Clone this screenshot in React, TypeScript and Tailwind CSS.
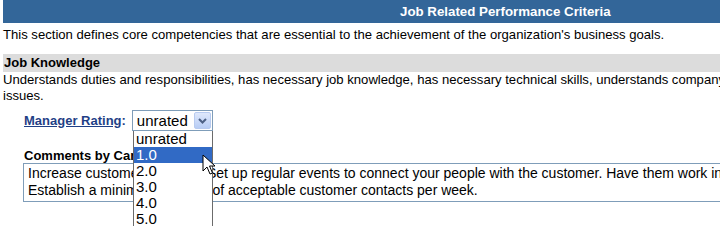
import React from 'react';

const ratings = ['unrated', '1.0', '2.0', '3.0', '4.0', '5.0'];

function Cursor() {
  return (
    <svg width="14" height="22" viewBox="0 0 14 22" className="absolute left-[202px] top-[154px]">
      <path d="M1 1 L1 17 L5 13 L8 20 L10.5 19 L7.5 12 L13 12 Z" fill="#fff" stroke="#000" strokeWidth="1" strokeLinejoin="miter" />
    </svg>
  );
}

export default function App() {
  return (
    <div className="relative w-[720px] h-[226px] overflow-hidden bg-white text-black font-['Liberation_Sans',Arial,sans-serif]">
      <div className="w-[1010px] pl-[3px]">
        {/* section header */}
        <div className="h-[23px] bg-[#336699] text-white font-bold text-[13.3px] leading-[23px] pl-[397px]">
          Job Related Performance Criteria
        </div>
        <p className="mt-[4px] text-[13.1px] leading-[16px]">
          This section defines core competencies that are essential to the achievement of the organization's business goals.
        </p>

        <div className="mt-[11px] h-[18px] bg-[#dcdcdc] pl-[1px] font-bold text-[13px] leading-[18px]">Job Knowledge</div>
        <div className="text-[13.1px] leading-[16px]">
          <div className="whitespace-nowrap">
            Understands duties and responsibilities, has necessary job knowledge, has necessary technical skills, understands company policies and procedures.
          </div>
          <div>issues.</div>
        </div>

        {/* rating */}
        <div className="mt-[6px] ml-[21px] flex items-center h-[21px]">
          <span className="text-[13px] font-bold text-[#1f3f86]">
            <span className="underline">Manager Rating</span>:
          </span>
          <div className="ml-[6px] w-[81px] h-[21px] border border-[#7f9db9] flex items-center bg-white">
            <span className="pl-[4px] text-[15px] leading-[18px] flex-1">unrated</span>
            <span className="mr-[1px] w-[17px] h-[17px] rounded-[2px] border border-[#b8cbf0] bg-gradient-to-b from-[#dfe8fb] to-[#b8cdf5] flex items-center justify-center">
              <svg width="9" height="6" viewBox="0 0 9 6">
                <path d="M1 1 L4.5 4.5 L8 1" fill="none" stroke="#4d6185" strokeWidth="2" />
              </svg>
            </span>
          </div>
        </div>

        <div className="mt-[17px] ml-[21px] text-[13px] font-bold leading-[15px]">Comments by Career Coach:</div>
        <div className="ml-[20px] h-[39px] border border-[#7f9db9] pl-[4px] pt-[1px] text-[14px] leading-[17px]">
          <div className="whitespace-nowrap">
            Increase customer contacts. Set up regular events to connect your people with the customer. Have them work in teams.
          </div>
          <div className="whitespace-nowrap">Establish a minimum number of acceptable customer contacts per week.</div>
        </div>

        <div className="mt-[24px] border-t border-[#d6d6d6]" />
      </div>

      {/* open dropdown list */}
      <ul className="absolute left-[133px] top-[131px] w-[80px] border-x border-[#6b6b6b] bg-white text-[15px] leading-[16px]">
        {ratings.map((r) => (
          <li key={r} className={r === '1.0' ? 'pl-[2px] bg-[#316ac5] text-white' : 'pl-[2px]'}>
            {r}
          </li>
        ))}
      </ul>
      <Cursor />
    </div>
  );
}
